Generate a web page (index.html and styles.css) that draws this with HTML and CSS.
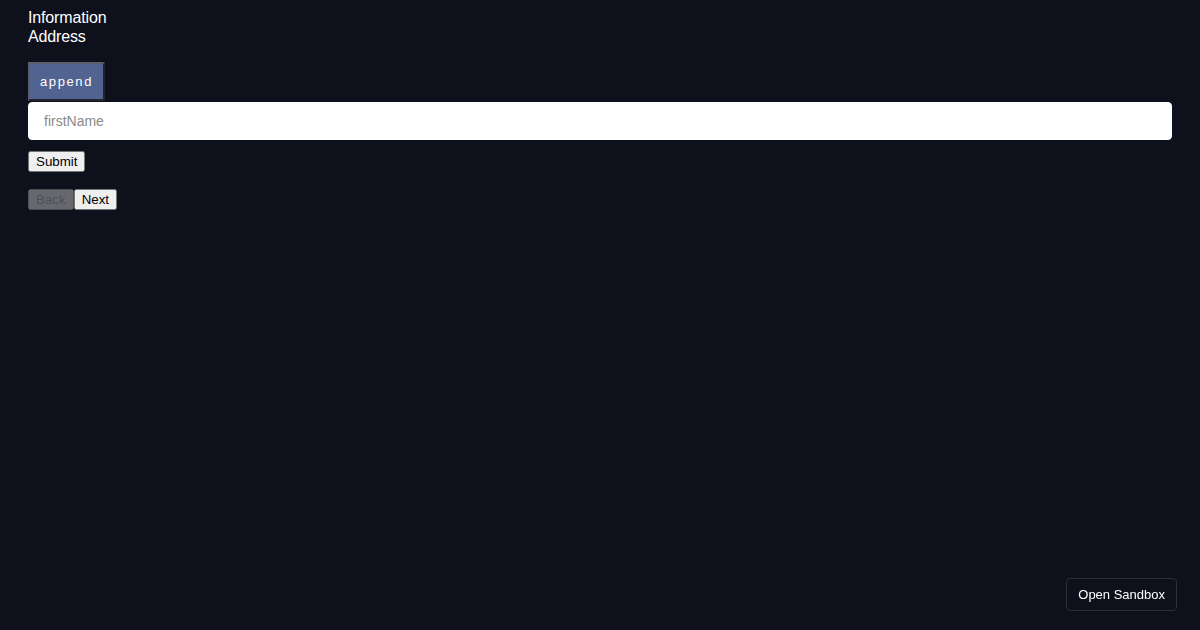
FILE: index.html
```html
<!DOCTYPE html>
<html>
<head>
<meta charset="utf-8">
<link rel="stylesheet" href="styles.css">
</head>
<body>
<form class="form">
  <div class="step-title">Information</div>
  <div class="step-title">Address</div>
  <div class="field-group">
    <button type="button" class="append-btn">append</button>
    <input class="text-input" type="text" placeholder="firstName">
  </div>
  <div class="submit-row"><input type="submit" class="native-btn" value="Submit"></div>
  <div class="nav-row"><button type="button" class="native-btn" disabled>Back</button><button type="button" class="native-btn">Next</button></div>
</form>
<button type="button" class="sandbox-btn">Open Sandbox</button>
</body>
</html>
```

FILE: styles.css
```css
html, body {
  margin: 0;
  padding: 0;
  background: #0e101c;
  height: 100%;
}
body {
  font-family: "Liberation Sans", Arial, sans-serif;
  color: #fff;
}
.form {
  padding: 8px 28px 0;
}
.step-title {
  font-size: 16px;
  line-height: 19px;
  letter-spacing: -0.15px;
}
.field-group {
  margin-top: 16px;
  display: flex;
  flex-direction: column;
  align-items: flex-start;
  gap: 1px;
}
.append-btn {
  font-family: "Liberation Sans", Arial, sans-serif;
  font-size: 13px;
  line-height: 15px;
  letter-spacing: 1.6px;
  color: #fff;
  background: #516391;
  border-width: 2px;
  border-style: solid;
  border-color: #5a5f6b #23252c #23252c #5a5f6b;
  padding: 10px 10px 10px 10px;
  margin: 0;
}
.text-input {
  box-sizing: border-box;
  width: 100%;
  height: 38px;
  border: 1px solid #fff;
  border-radius: 4px;
  padding: 10px 15px;
  font-family: "Liberation Sans", Arial, sans-serif;
  font-size: 14px;
  margin: 0;
  background: #fff;
  outline: none;
}
.text-input::placeholder {
  color: #8a8a8a;
}
.submit-row {
  margin-top: 11px;
  display: flex;
}
.nav-row {
  margin-top: 17px;
  display: flex;
}
.native-btn {
  font-family: "Liberation Sans", Arial, sans-serif;
  font-size: 13.33px;
  margin: 0;
}
.sandbox-btn {
  position: fixed;
  right: 23px;
  bottom: 19px;
  font-family: "Liberation Sans", Arial, sans-serif;
  font-size: 13px;
  line-height: 15px;
  color: #fff;
  background: transparent;
  border: 1px solid #2c2f3a;
  border-radius: 4px;
  padding: 8px 11px;
}
```
